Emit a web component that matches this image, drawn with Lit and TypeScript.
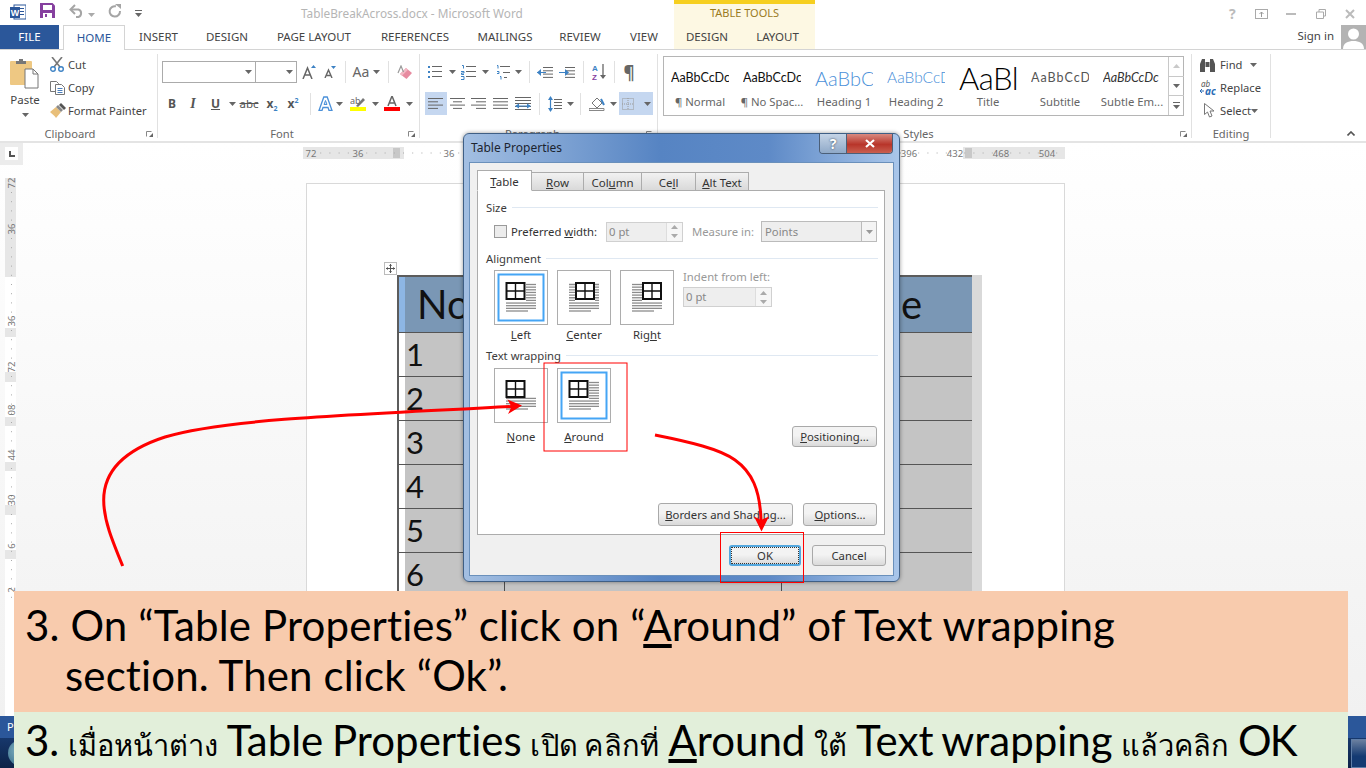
import {LitElement, html, svg, css, TemplateResult} from 'lit';
import {customElement} from 'lit/decorators.js';

const UI = css`
  * {
    box-sizing: border-box;
  }
`;

const ico = (w: number, h: number, body: unknown) =>
  html`<svg width=${w} height=${h} viewBox="0 0 ${w} ${h}" fill="none">${body}</svg>`;

const caret = ico(7, 4, svg`<path d="M0 0h7L3.500 4z" fill="#666"/>`);

const lines = (x: number, y: number, w: number, n: number, step = 3, c = '#666') =>
  Array.from({length: n}, (_, i) => svg`<path d="M${x} ${y + i * step + 0.5}h${w}" stroke=${c}/>`);

const wordIcon = ico(16, 16, svg`
  <rect x="4" y="1" width="12" height="14" fill="#fff" stroke="#2b579a"/>
  <path d="M9 4.500h5M9 7.500h5M9 10.500h5" stroke="#2b579a"/>
  <rect x="0" y="3" width="10" height="11" fill="#2b579a"/>
  <text x="5" y="12" font-size="9" font-weight="700" fill="#fff" text-anchor="middle" font-family="Liberation Sans">W</text>`);
const saveIcon = ico(15, 15, svg`
  <path d="M0 0h12.500L15 2.500V15H0z" fill="#86409f"/>
  <rect x="3" y="2" width="9" height="5" fill="#fff"/>
  <rect x="3" y="10" width="9" height="5" fill="#fff"/>
  <rect x="5" y="11" width="2" height="3" fill="#86409f"/>`);
const undoIcon = ico(15, 14, svg`
  <path d="M2 5.500h7.500a4 4 0 0 1 0 7.500H7" stroke="#a5a5a5" stroke-width="2"/>
  <path d="M6 1L1.500 5.500 6 10" stroke="#a5a5a5" stroke-width="2"/>`);
const redoIcon = ico(14, 14, svg`
  <path d="M8 2.300A5.200 5.200 0 1 0 12 7" stroke="#a5a5a5" stroke-width="2"/>
  <path d="M7 0h6v5z" fill="#a5a5a5"/>`);
const customizeIcon = ico(7, 7, svg`<path d="M0 .500h7" stroke="#666"/><path d="M0 3h7L3.500 7z" fill="#666"/>`);
const lightCaret = ico(7, 4, svg`<path d="M0 0h7L3.500 4z" fill="#aaa"/>`);

const pasteIcon = ico(30, 31, svg`
  <rect x="0" y="3" width="22" height="24" rx="1" fill="#eec883"/>
  <path d="M6 3h3V1h4v2h3v3H6z" fill="#777"/>
  <path d="M15 11h8l5 5v14H15z" fill="#fff" stroke="#777"/>
  <path d="M23 11v5h5" stroke="#777"/>`);
const cutIcon = ico(14, 15, svg`
  <path d="M2 0l8 10M12 0L4 10" stroke="#777" stroke-width="1.600"/>
  <circle cx="3" cy="12" r="2.300" stroke="#3d82c4" stroke-width="1.400"/>
  <circle cx="11" cy="12" r="2.300" stroke="#3d82c4" stroke-width="1.400"/>`);
const copyIcon = ico(15, 14, svg`
  <path d="M.5.500h6l2 2v8H.5z" fill="#fff" stroke="#777"/>
  <path d="M5.500 3.500h6l3 3v7h-9z" fill="#fff" stroke="#777"/>
  <path d="M7.500 7.500h5M7.500 9.500h5M7.500 11.500h5" stroke="#4a7ebb"/>`);
const painterIcon = ico(16, 15, svg`
  <path d="M0 9l6-5 5 5-5 6C5 13 2 11 0 9z" fill="#e8bf7a"/>
  <path d="M6 4l5 5 2-2-5-5z" fill="#888"/>
  <path d="M9 2l2-2 5 5-2 2z" fill="#555"/>`);

const growIcon = ico(14, 14, svg`
  <path d="M1 14L5.500 3 10 14M3 10h5" stroke="#666" stroke-width="1.500"/>
  <path d="M9 3l2.500-3L14 3z" fill="#3d82c4"/>`);
const shrinkIcon = ico(12, 12, svg`
  <path d="M1 12L4.500 4 8 12M2.500 9.500h4" stroke="#666" stroke-width="1.400"/>
  <path d="M7 0h5L9.500 3z" fill="#3d82c4"/>`);
const eraserIcon = ico(15, 15, svg`
  <path d="M3 9l6-6 6 5-5.500 6z" fill="#e78ba0"/>
  <path d="M3 9l6-6 2 1.700-6 6z" fill="#f2b8c4"/>
  <path d="M1 8L4 1l2.500 6" stroke="#999" stroke-width="1.200"/>`);

const glyph = (t: string, cls = '') => html`<span class="glyph ${cls}">${t}</span>`;

const effectIcon = ico(15, 15, svg`
  <path d="M5.800 1h3.400L14 14.500h-3l-1-3H5l-1 3H1z" fill="#fff" stroke="#4a90d9" stroke-width="1.300"/>
  <path d="M6 8.500h3L7.500 4.500z" fill="#cfe1f5" stroke="#4a90d9"/>`);
const highlightIcon = ico(16, 15, svg`
  <text x="0" y="8" font-size="9" fill="#666" font-family="Noto Sans">ab</text>
  <path d="M6 10l7-8 2 2-7 7z" fill="#777"/>
  <rect x="0" y="11" width="16" height="4" fill="#ff0"/>`);
const colorIcon = ico(16, 15, svg`
  <path d="M4 10L8 0l4 10M5.500 7h5" stroke="#666" stroke-width="1.500"/>
  <rect x="0" y="11" width="16" height="4" fill="#f00"/>`);

const bulletIcon = ico(14, 14, svg`
  <rect x="0" y="1" width="2" height="2" fill="#3d82c4"/><rect x="0" y="6" width="2" height="2" fill="#3d82c4"/><rect x="0" y="11" width="2" height="2" fill="#3d82c4"/>
  ${lines(4, 1, 10, 3, 5)}`);
const numberIcon = ico(15, 15, svg`
  <path d="M1 .500h1.500v3M0 6.500h3v1.500H0.500v1.500H3M0 11.500h3v3H0" stroke="#3d82c4"/>
  ${lines(5, 1, 10, 3, 5)}`);
const multiIcon = ico(14, 15, svg`
  <path d="M1 .500h1v3M1 6.500h2v2H1M4 11.500h1v3" stroke="#3d82c4"/>
  <path d="M4 1.500h10M7 7.500h7M8 12.500h3" stroke="#666"/>`);
const outdentIcon = ico(16, 11, svg`
  ${lines(6, 0, 10, 4, 3.300)}
  <path d="M0 5.500h9" stroke="#3d82c4"/><path d="M4 2L0 5.500 4 9z" fill="#3d82c4"/>`);
const indentIcon = ico(16, 11, svg`
  ${lines(6, 0, 10, 4, 3.300)}
  <path d="M0 5.500h7" stroke="#3d82c4"/><path d="M6 2l4 3.500L6 9z" fill="#3d82c4"/>`);
const sortIcon = ico(15, 16, svg`
  <text x="0" y="7" font-size="8" font-weight="700" fill="#3d82c4" font-family="Liberation Sans">A</text>
  <text x="0" y="16" font-size="8" font-weight="700" fill="#86409f" font-family="Liberation Sans">Z</text>
  <path d="M11 0v14" stroke="#666" stroke-width="1.300"/><path d="M8 11l3 4 3-4z" fill="#666"/>`);
const pilcrowIcon = html`<span class="glyph pil">¶</span>`;
const align = (x: number[][]) =>
  ico(16, 11, svg`${x.map(([a, w], i) => svg`<path d="M${a} ${i * 3.3 + 0.5}h${w}" stroke="#666"/>`)}`);
const alignLeft = align([[0, 15], [0, 10], [0, 15], [0, 10]]);
const alignCenter = align([[0, 15], [3, 9], [0, 15], [3, 9]]);
const alignRight = align([[0, 15], [5, 10], [0, 15], [5, 10]]);
const alignJustify = align([[0, 15], [0, 15], [0, 15], [0, 15]]);
const distributeIcon = ico(16, 15, svg`
  ${lines(0, 1, 16, 5, 3)}
  <path d="M1 10h14" stroke="#3d82c4"/><path d="M4 7.500L0 10l4 2.500zM12 7.500l4 2.500-4 2.500z" fill="#3d82c4"/>`);
const spacingIcon = ico(14, 16, svg`
  <path d="M2.500 1v14" stroke="#3d82c4" stroke-width="1.200"/><path d="M0 4l2.500-4L5 4zM0 12l2.500 4L5 12z" fill="#3d82c4"/>
  ${lines(6, 3, 8, 4, 3)}`);
const shadingIcon = ico(17, 15, svg`
  <path d="M3 7l5-5 5 5-5 5z" fill="#fff" stroke="#777"/>
  <path d="M12 3l3 6" stroke="#3d82c4" stroke-width="2"/>
  <path d="M0 12.500h15v2H0z" stroke="#888"/>`);
const bordersIcon = ico(12, 12, svg`
  <rect x=".5" y=".5" width="11" height="11" stroke="#999" stroke-dasharray="1 1"/>
  <path d="M6 0v12M0 6h12" stroke="#999" stroke-dasharray="1 1"/>`);
const binocularsIcon = ico(15, 14, svg`
  <path d="M0 14V6l2-5h3v13zM15 14V6l-2-5h-3v13zM5.500 4h4v5h-4z" fill="#555"/>`);
const replaceIcon = ico(16, 15, svg`
  <text x="1" y="7" font-size="8" fill="#555" font-family="Noto Sans">ab</text>
  <text x="5" y="15" font-size="10" font-weight="700" fill="#2b6cb5" font-family="Noto Sans">ac</text>
  <path d="M0 11h4M0 11l2-2M0 11l2 2" stroke="#2b6cb5"/>`);
const selectIcon = ico(10, 15, svg`<path d="M.5.500v11l3-2.500 2 5 2.500-1-2-5h4z" fill="#fff" stroke="#777"/>`);

@customElement('word-ribbon')
export class WordRibbon extends LitElement {
  static styles = [
    UI,
    css`
      :host {
        display: block;
        font-family: 'Noto Sans', sans-serif;
        font-size: 11.5px;
        color: #444;
      }
      .title {
        display: grid;
        grid-template-columns: 301px 373px 141px 1fr;
        height: 25px;
      }
      .qat {
        display: flex;
        align-items: center;
        padding: 0 0 3px 10px;
      }
      .qat svg {
        flex: none;
      }
      .qat-save {
        margin-left: 14px;
      }
      .qat-undo {
        margin-left: 14px;
      }
      .qat-undo-c {
        margin-left: 4px;
      }
      .qat-redo {
        margin-left: 13px;
      }
      .qat-more {
        margin-left: 13px;
      }
      .doc-name {
        font-size: 11.8px;
        color: #b5b5b5;
        line-height: 27px;
        white-space: nowrap;
      }
      .tt-label {
        background: #fdf8e3;
        border-top: 4px solid #f6cf1f;
        color: #9a7b1e;
        font-size: 11px;
        text-align: center;
        line-height: 18px;
      }
      .win {
        display: flex;
        justify-content: flex-end;
        align-items: center;
        padding-right: 1px;
      }
      .win span {
        width: 29.5px;
        display: flex;
        justify-content: center;
      }
      .win .help {
        color: #bbb;
        font-weight: 700;
        font-size: 14px;
      }
      .tabs {
        display: flex;
        height: 25px;
        border-bottom: 1px solid #d4d4d4;
      }
      .tab {
        flex: none;
        text-align: center;
        line-height: 24px;
        white-space: nowrap;
        height: 24px;
      }
      .file {
        background: #2b579a;
        color: #fff;
        margin-right: 4px;
      }
      .home {
        color: #2b579a;
        border: 1px solid #d4d4d4;
        border-bottom: 0;
        background: #fff;
        height: 25px;
        line-height: 23px;
      }
      .ctx {
        background: #fdf8e3;
      }
      .signin {
        margin-left: auto;
        line-height: 22px;
        margin-right: 7px;
      }
      .avatar {
        display: block;
        width: 25px;
        height: 24px;
      }
      .ribbon {
        display: flex;
        height: 93px;
        padding-top: 4px;
        border-bottom: 2px solid #e4e4e4;
      }
      .group {
        flex: none;
        height: 84px;
        border-right: 1px solid #e1e1e1;
        display: flex;
        flex-direction: column;
      }
      .w-clip {
        width: 158px;
      }
      .w-font {
        width: 262px;
        padding-left: 4px;
      }
      .w-para {
        width: 238px;
        padding-left: 5px;
      }
      .w-styles {
        width: 534px;
        padding: 2px 0 0 5px;
      }
      .w-edit {
        width: 79px;
      }
      .body {
        flex: 1;
        min-height: 0;
      }
      .glabel {
        display: flex;
        align-items: center;
        height: 16px;
        margin-bottom: -3px;
        color: #666;
        font-size: 11.2px;
      }
      .glabel .nm {
        flex: 1;
        text-align: center;
      }
      .launch {
        margin: 2px 4px 0 6px;
        width: 7px;
        height: 6px;
        display: block;
      }
      .clip {
        display: flex;
      }
      .paste {
        width: 50px;
        display: flex;
        flex-direction: column;
        align-items: center;
        padding-top: 4px;
      }
      .paste span {
        margin-top: 3px;
        line-height: 16px;
        font-size: 11.5px;
      }
      .paste svg:last-child {
        margin-top: 5px;
      }
      .cmds {
        margin-top: -1px;
      }
      .cmd {
        height: 23px;
        display: flex;
        align-items: center;
        white-space: nowrap;
        font-size: 11.2px;
      }
      .cmd i {
        flex: none;
        width: 18px;
        display: flex;
      }
      .edit-cmds {
        padding-left: 8px;
      }
      .edit-cmds .cmd i {
        width: 20px;
      }
      .edit-cmds .select-i {
        width: 19px;
        padding-left: 4px;
      }
      .find-c {
        display: flex;
        margin-left: 7px;
      }
      .bd-c {
        display: flex;
        margin-left: 10px;
      }
      .select-c {
        display: flex;
      }
      .row {
        display: flex;
        align-items: center;
      }
      .row1 {
        height: 22px;
        margin-top: 7px;
      }
      .row2 {
        height: 23px;
        margin-top: 9px;
      }
      .cell {
        flex: none;
        height: 100%;
        display: flex;
        align-items: center;
        justify-content: center;
      }
      .on {
        background: #c5d7f0;
      }
      .sep::after {
        content: '';
        width: 1px;
        height: 22px;
        background: #e1e1e1;
      }
      .combo {
        height: 22px;
        border: 1px solid #ababab;
        display: flex;
        align-items: center;
        justify-content: flex-end;
        padding-right: 3px;
        flex: none;
      }
      .c1 {
        width: 94px;
      }
      .c2 {
        width: 42px;
        margin-left: -1px;
      }
      .glyph {
        font-weight: 700;
        font-size: 12px;
        color: #555;
        line-height: 1;
      }
      .g-i {
        font-style: italic;
        font-family: 'Liberation Serif', serif;
        font-size: 14px;
      }
      .g-u {
        text-decoration: underline;
      }
      .g-s {
        text-decoration: line-through;
        font-weight: 400;
        font-size: 11.5px;
      }
      .g-aa {
        font-size: 14px;
        font-weight: 400;
        color: #666;
      }
      .pil {
        font-size: 17px;
        font-weight: 700;
        color: #666;
      }
      .g-sub sub,
      .g-sub sup {
        font-size: 7px;
        color: #3d82c4;
        line-height: 0;
      }
      .gallery {
        width: 521px;
        height: 60px;
        border: 1px solid #b5b5b5;
        display: flex;
      }
      .style {
        flex: none;
        width: 72px;
        padding: 0 7px;
        display: flex;
        flex-direction: column;
      }
      .sample {
        height: 37px;
        width: 58px;
        overflow: hidden;
        white-space: nowrap;
        display: flex;
        align-items: center;
        padding-top: 5px;
        font-family: Lato, sans-serif;
        font-size: 12.5px;
        line-height: 1;
        color: #111;
      }
      .s-h1 {
        font-size: 20px;
        font-weight: 300;
        color: #4a90d9;
      }
      .s-h2 {
        font-size: 15.5px;
        font-weight: 300;
        color: #4a90d9;
      }
      .s-title {
        font-size: 31px;
        font-weight: 300;
        color: #000;
        letter-spacing: -0.5px;
      }
      .s-sub {
        letter-spacing: 1px;
        color: #555;
        font-size: 12.5px;
      }
      .s-em {
        font-style: italic;
        color: #333;
      }
      .style-name {
        text-align: center;
        white-space: nowrap;
        margin: 0 -7px;
        line-height: 16px;
        color: #666;
        font-size: 11.3px;
      }
      .scroll {
        flex: none;
        width: 16px;
        border-left: 1px solid #c8c8c8;
        display: flex;
        flex-direction: column;
      }
      .scroll div {
        flex: 1;
        display: flex;
        align-items: center;
        justify-content: center;
      }
      .scroll div + div {
        border-top: 1px solid #c8c8c8;
      }
      .scroll .off {
        opacity: 0.35;
      }
      .collapse {
        flex: 1;
        display: flex;
        justify-content: flex-end;
        align-items: flex-end;
        padding: 0 11px 5px 0;
      }
    `,
  ];

  private tabs: [string, number][] = [
    ['INSERT', 67],
    ['DESIGN', 70],
    ['PAGE LAYOUT', 104],
    ['REFERENCES', 98],
    ['MAILINGS', 82],
    ['REVIEW', 68],
    ['VIEW', 60],
  ];

  private tools(items: [number, unknown, string?][]) {
    return items.map(
      ([w, t, c]) =>
        html`<span class="cell ${c ?? ''}" style="width:${w}px">${t}</span>`
    );
  }

  private launcher() {
    return html`<svg class="launch" viewBox="0 0 7 6">
      <path d="M.5 5.500V.500h5" stroke="#888" fill="none" />
      <path d="M7 6H3l4-4z" fill="#666" />
    </svg>`;
  }

  private group(cls: string, name: string, launch: boolean, body: TemplateResult) {
    return html`<div class="group ${cls}">
      <div class="body">${body}</div>
      <div class="glabel">
        <span class="nm">${name}</span>${launch ? this.launcher() : ''}
      </div>
    </div>`;
  }

  private styleItem(sample: string, cls: string, name: string) {
    return html`<div class="style">
      <div class="sample ${cls}">${sample}</div>
      <div class="style-name">${name}</div>
    </div>`;
  }

  render() {
    return html`
      <div class="title">
        <div class="qat">
          ${wordIcon}
          <span class="qat-save">${saveIcon}</span>
          <span class="qat-undo">${undoIcon}</span>
          <span class="qat-undo-c">${lightCaret}</span>
          <span class="qat-redo">${redoIcon}</span>
          <span class="qat-more">${customizeIcon}</span>
        </div>
        <div class="doc-name">TableBreakAcross.docx - Microsoft Word</div>
        <div class="tt-label">TABLE TOOLS</div>
        <div class="win">
          <span class="help">?</span>
          <span>${ico(13, 10, svg`<rect x=".5" y=".5" width="12" height="9" stroke="#aaa"/><path d="M6.500 8V3M4.500 5l2-2 2 2" stroke="#999"/>`)}</span>
          <span>${ico(10, 2, svg`<rect width="10" height="2" fill="#bbb"/>`)}</span>
          <span>${ico(10, 10, svg`<path d="M.5 3h7v6.500H.5zM3 3V.5h6.500V7H8" stroke="#aaa"/>`)}</span>
          <span>${ico(10, 10, svg`<path d="M1 1l8 8M9 1l-8 8" stroke="#bbb" stroke-width="2"/>`)}</span>
        </div>
      </div>
      <div class="tabs">
        <div class="tab file" style="width:59px">FILE</div>
        <div class="tab home" style="width:62px">HOME</div>
        ${this.tabs.map(
          ([t, w]) => html`<div class="tab" style="width:${w}px">${t}</div>`
        )}
        <div class="tab ctx" style="width:66px">DESIGN</div>
        <div class="tab ctx" style="width:75px">LAYOUT</div>
        <div class="signin">Sign in</div>
        <svg class="avatar" viewBox="0 0 25 24">
          <rect width="25" height="24" fill="#b3b3b3" />
          <circle cx="12.500" cy="9" r="5.500" fill="#fff" />
          <path d="M2 24c0-6 5-8 10.500-8S23 18 23 24z" fill="#fff" />
        </svg>
      </div>
      <div class="ribbon">
        ${this.group(
          'w-clip',
          'Clipboard',
          true,
          html`<div class="clip">
            <div class="paste">
              ${pasteIcon}
              <span>Paste</span>
              ${caret}
            </div>
            <div class="cmds">
              <div class="cmd"><i>${cutIcon}</i>Cut</div>
              <div class="cmd"><i>${copyIcon}</i>Copy</div>
              <div class="cmd"><i>${painterIcon}</i>Format Painter</div>
            </div>
          </div>`
        )}
        ${this.group(
          'w-font',
          'Font',
          true,
          html`<div class="row row1">
              <div class="combo c1">${caret}</div>
              <div class="combo c2">${caret}</div>
              ${this.tools([
                [23, growIcon],
                [20, shrinkIcon],
                [10, '', 'sep'],
                [22, glyph('Aa', 'g-aa')],
                [8, caret],
                [16, '', 'sep'],
                [16, eraserIcon],
              ])}
            </div>
            <div class="row row2">
              ${this.tools([
                [20, glyph('B')],
                [22, glyph('I', 'g-i')],
                [23, glyph('U', 'g-u')],
                [10, caret],
                [24, glyph('abc', 'g-s')],
                [22, html`<span class="glyph g-sub">x<sub>2</sub></span>`],
                [20, html`<span class="glyph g-sub">x<sup>2</sup></span>`],
                [14, '', 'sep'],
                [16, effectIcon],
                [12, caret],
                [26, highlightIcon],
                [8, caret],
                [26, colorIcon],
                [8, caret],
              ])}
            </div>`
        )}
        ${this.group(
          'w-para',
          'Paragraph',
          true,
          html`<div class="row row1">
              ${this.tools([
                [20, bulletIcon],
                [14, caret],
                [19, numberIcon],
                [15, caret],
                [19, multiIcon],
                [12, caret],
                [10, '', 'sep'],
                [22, outdentIcon],
                [22, indentIcon],
                [10, '', 'sep'],
                [22, sortIcon],
                [8, '', 'sep'],
                [22, pilcrowIcon],
              ])}
            </div>
            <div class="row row2">
              ${this.tools([
                [22, alignLeft, 'on'],
                [21, alignCenter],
                [22, alignRight],
                [22, alignJustify],
                [22, distributeIcon],
                [10, '', 'sep'],
                [22, spacingIcon],
                [8, caret],
                [12, '', 'sep'],
                [22, shadingIcon],
                [11, caret],
                [34, html`${bordersIcon}<span class="bd-c">${caret}</span>`, 'on'],
              ])}
            </div>`
        )}
        ${this.group(
          'w-styles',
          'Styles',
          true,
          html`<div class="gallery">
            ${this.styleItem('AaBbCcDc', '', '¶ Normal')}
            ${this.styleItem('AaBbCcDc', '', '¶ No Spac...')}
            ${this.styleItem('AaBbCc', 's-h1', 'Heading 1')}
            ${this.styleItem('AaBbCcD', 's-h2', 'Heading 2')}
            ${this.styleItem('AaBl', 's-title', 'Title')}
            ${this.styleItem('AaBbCcD', 's-sub', 'Subtitle')}
            ${this.styleItem('AaBbCcDc', 's-em', 'Subtle Em...')}
            <div class="scroll">
              <div class="off">${ico(7, 4, svg`<path d="M0 4h7L3.500 0z" fill="#666"/>`)}</div>
              <div>${caret}</div>
              <div>${customizeIcon}</div>
            </div>
          </div>`
        )}
        ${this.group(
          'w-edit',
          'Editing',
          false,
          html`<div class="cmds edit-cmds">
            <div class="cmd">
              <i>${binocularsIcon}</i>Find<span class="find-c">${caret}</span>
            </div>
            <div class="cmd"><i>${replaceIcon}</i>Replace</div>
            <div class="cmd">
              <i class="select-i">${selectIcon}</i>Select<span class="select-c">${caret}</span>
            </div>
          </div>`
        )}
        <div class="collapse">
          ${ico(8, 5, svg`<path d="M.5 4.500L4 1l3.500 3.500" stroke="#555" stroke-width="1.600"/>`)}
        </div>
      </div>
    `;
  }
}

const VR_WHITE: [number, number][] = [
  [277, 328],
  [337, 372],
  [382, 417],
  [426, 462],
  [471, 505],
  [515, 550],
  [559, 716],
];
const VR_LABELS: [string, number][] = [
  ['72', 183],
  ['36', 229],
  ['36', 321],
  ['72', 367],
  ['08', 410],
  ['44', 455],
  ['30', 500],
  ['6', 546],
  ['2', 590],
];
const HR_LABELS: [string, number][] = [
  ['72', 311],
  ['36', 358],
  ['36', 449],
  ['396', 909],
  ['432', 955],
  ['468', 1001],
  ['504', 1047],
];

@customElement('word-document')
export class WordDocument extends LitElement {
  static styles = [
    UI,
    css`
      :host {
        display: block;
        height: 100%;
        font-family: 'Noto Sans', sans-serif;
      }
      .doc {
        display: grid;
        grid-template-columns: 23px 1fr;
        grid-template-rows: 22px 1fr;
        height: 100%;
        background: linear-gradient(#fff, #f1f1f1);
        overflow: hidden;
      }
      .corner {
        background: #ececec;
        padding: 4px 5px;
      }
      .corner div {
        width: 13px;
        height: 13px;
        background: #fff;
        display: flex;
        align-items: center;
        justify-content: center;
      }
      .hr {
        display: block;
        margin: 4px 0 0 280px;
      }
      .vr {
        display: block;
      }
      .pagewrap {
        min-height: 0;
        overflow: hidden;
        padding: 18px 0 0 283px;
      }
      .page {
        position: relative;
        width: 759px;
        height: 800px;
        background: #fff;
        border: 1px solid #d9d9d9;
        padding: 91px 0 0 90px;
      }
      .move {
        position: absolute;
        left: 77px;
        top: 78px;
        width: 13px;
        height: 13px;
        border: 1px solid #bbb;
        background: #fff;
        display: flex;
        align-items: center;
        justify-content: center;
      }
      .table {
        display: grid;
        width: 585px;
        grid-template-columns: 107px 277px 191px 10px;
        font-family: Lato, sans-serif;
        color: #111;
      }
      .c {
        border-left: 1px solid #4c4c4c;
        border-bottom: 1px solid #555;
        height: 44px;
        background: #c4c4c4;
        font-size: 31px;
        line-height: 42px;
      }
      .c.first {
        border-left: 2px solid #5c5c5c;
        background: linear-gradient(to right, #fff 6px, #c4c4c4 6px);
        padding-left: 7px;
      }
      .h {
        background: #7a97b5;
        height: 58px;
        border-top: 2px solid #5c5c5c;
        font-size: 40px;
        line-height: 54px;
      }
      .h.first {
        background: linear-gradient(to right, #8db6e4 6px, #7a97b5 6px);
        padding-left: 18px;
      }
      .h.end {
        text-align: right;
        padding-right: 50px;
      }
      .strip {
        background: #d9d9d9;
      }
    `,
  ];

  render() {
    const rows = ['1', '2', '3', '4', '5', '6'];
    return html`<div class="doc">
      <div class="corner">
        <div>
          <svg width="6" height="6" viewBox="0 0 6 6">
            <path d="M1 0v5h5" stroke="#555" stroke-width="2" fill="none" />
          </svg>
        </div>
      </div>
      <svg class="hr" width="762" height="12" viewBox="303 0 762 12" font-size="9.5" font-family="Noto Sans">
        <rect x="303" width="762" height="12" fill="#e6e6e6" />
        <rect x="404" width="559" height="12" fill="#fff" />
        <rect x="393" y="1" width="7" height="10" fill="#c8c8c8" />
        <rect x="965" y="1" width="7" height="10" fill="#c8c8c8" />
        ${Array.from({length: 82}, (_, i) => 311 + i * 9.2).map(
          (x) => svg`<rect x=${x} y="5.500" width="1" height="1" fill="#aaa" />`
        )}
        ${HR_LABELS.map(
          ([t, x]) => svg`<rect x=${x - 7} width="14" y="1" height="10" fill=${x < 400 || x > 963 ? '#e6e6e6' : '#fff'} /><text x=${x} y="9.500" fill="#777" text-anchor="middle">${t}</text>`
        )}
      </svg>
      <svg class="vr" width="23" height="551" viewBox="0 165 23 551" font-size="9.5" font-family="Noto Sans">
        <rect x="5" y="178" width="11" height="538" fill="#e6e6e6" />
        ${VR_WHITE.map(
          ([a, b]) => svg`<rect x="5" y=${a} width="11" height=${b - a} fill="#fff" />`
        )}
        ${Array.from({length: 45}, (_, i) => 192 + i * 9.2).map(
          (y) => svg`<rect x="11" y=${y} width="1" height="1" fill="#aaa" />`
        )}
        ${VR_LABELS.map(
          ([t, y]) => svg`<text x="14.500" y=${y} fill="#777" text-anchor="middle" transform="rotate(-90 14.500 ${y})">${t}</text>`
        )}
      </svg>
      <div class="pagewrap">
        <div class="page">
          <div class="move">
            <svg width="9" height="9" viewBox="0 0 9 9">
              <path d="M4.500 0v9M0 4.500h9" stroke="#555" />
              <path d="M3 2l1.500-2L6 2zM3 7l1.500 2L6 7zM2 3L0 4.500 2 6zM7 3l2 1.500L7 6z" fill="#555" />
            </svg>
          </div>
          <div class="table">
            <div class="c h first">No</div>
            <div class="c h"></div>
            <div class="c h end">Name</div>
            <div class="strip"></div>
            ${rows.map(
              (r) => html`<div class="c first">${r}</div>
                <div class="c"></div>
                <div class="c"></div>
                <div class="strip"></div>`
            )}
          </div>
        </div>
      </div>
    </div>`;
  }
}

type OptKind = 'left' | 'center' | 'right' | 'none' | 'around';

@customElement('table-dialog')
export class TableDialog extends LitElement {
  static styles = [
    UI,
    css`
      :host {
        position: absolute;
        left: 463px;
        top: 133px;
        width: 437px;
        height: 449px;
        font-family: 'Noto Sans', sans-serif;
        font-size: 11.3px;
        color: #333;
      }
      .win {
        height: 100%;
        border: 1px solid #3f5f85;
        border-radius: 6px;
        background: linear-gradient(90deg, #a3bfe2, #5684c3 45%, #5e8ac7 70%, #a9c6ea);
        box-shadow: 0 0 4px rgba(0, 0, 0, 0.4);
        padding: 0 5px 5px;
        display: flex;
        flex-direction: column;
      }
      .bar {
        height: 28px;
        flex: none;
        display: flex;
      }
      .cap {
        flex: 1;
        line-height: 27px;
        padding-left: 2px;
        font-size: 12px;
        color: #1c2430;
      }
      .ctl {
        display: flex;
        height: 20px;
        margin-right: 1px;
        border: 1px solid #4b5f78;
        border-top: 0;
        border-radius: 0 0 4px 4px;
        overflow: hidden;
      }
      .ctl span {
        display: flex;
        align-items: center;
        justify-content: center;
      }
      .q {
        width: 27px;
        background: linear-gradient(#c5d4e6, #8fa9c8);
        color: #fff;
        font-weight: 700;
        font-size: 14px;
        text-shadow: 0 0 2px #234;
        border-right: 1px solid #4b5f78;
      }
      .x {
        width: 45px;
        background: linear-gradient(#d98a80, #b8352a 55%, #c95f50);
      }
      .panel {
        flex: 1;
        min-height: 0;
        background: #f0f0f0;
        border: 1px solid #6a90bb;
        padding: 7px 7px 9px 7px;
        display: flex;
        flex-direction: column;
      }
      .tabs {
        display: flex;
        height: 21px;
        flex: none;
        align-items: flex-end;
        position: relative;
        z-index: 1;
        margin-bottom: -1px;
      }
      .tab {
        height: 19px;
        border: 1px solid #acacac;
        border-left: 0;
        background: linear-gradient(#f2f2f2, #d9d9d9);
        text-align: center;
        line-height: 19px;
        font-size: 11.5px;
      }
      .tab.cur {
        height: 21px;
        line-height: 22px;
        background: #fff;
        border-left: 1px solid #acacac;
        border-bottom-color: #fff;
      }
      .page {
        flex: 1;
        min-height: 0;
        margin-right: 1px;
        background: #fff;
        border: 1px solid #acacac;
        padding: 9px 6px 8px 8px;
        display: flex;
        flex-direction: column;
      }
      .head {
        display: flex;
        align-items: center;
        height: 14px;
        gap: 5px;
        color: #3c3c3c;
      }
      .head::after {
        content: '';
        flex: 1;
        height: 1px;
        background: #dfe8f2;
      }
      .head.a {
        margin-top: 9px;
      }
      .head.w {
        margin-top: 5px;
      }
      .size {
        display: flex;
        align-items: center;
        height: 21px;
        margin: 7px 0 0 8px;
        white-space: nowrap;
      }
      .check {
        flex: none;
        width: 13px;
        height: 13px;
        border: 1px solid #9a9a9a;
        background: #ececec;
        margin-right: 4px;
      }
      .lbl {
        flex: none;
        width: 95px;
      }
      .spin {
        display: flex;
        border: 1px solid #d0d0d0;
        background: #eee;
        height: 20px;
        flex: none;
        color: #888;
      }
      .spin .v {
        flex: 1;
        padding-left: 2px;
        line-height: 18px;
      }
      .spin .b {
        width: 16px;
        border-left: 1px solid #ddd;
        display: flex;
        flex-direction: column;
        align-items: center;
        justify-content: space-around;
        background: #f6f6f6;
      }
      .w77 {
        width: 77px;
      }
      .w89 {
        width: 89px;
        margin-top: 3px;
      }
      .dim {
        color: #999;
      }
      .mi {
        flex: none;
        width: 78px;
        padding-left: 9px;
      }
      .sel {
        flex: none;
        width: 116px;
        height: 21px;
        border: 1px solid #bbb;
        background: #eee;
        display: flex;
        align-items: center;
        justify-content: space-between;
        padding-left: 3px;
        color: #888;
      }
      .sel span {
        width: 15px;
        height: 19px;
        border-left: 1px solid #bbb;
        background: #f4f4f4;
        display: flex;
        align-items: center;
        justify-content: center;
      }
      .opts {
        display: flex;
        margin: 5px 0 0 8px;
      }
      .opts.wrap {
        margin-top: 6px;
      }
      .opt {
        width: 54px;
        margin-right: 9px;
        text-align: center;
      }
      .box {
        height: 55px;
        border: 1px solid #adadad;
        background: #fff;
        display: block;
      }
      .opt .t {
        display: block;
        margin-top: 2px;
        line-height: 16px;
      }
      .opts.wrap .t {
        margin-top: 6px;
      }
      .indent {
        line-height: 14px;
      }
      .pos {
        margin: 58px 1px 0 auto;
        width: 85px;
      }
      .btn {
        height: 21px;
        line-height: 19px;
        text-align: center;
        border: 1px solid #a9a9a9;
        border-radius: 3px;
        background: linear-gradient(#f3f3f3 45%, #dadada);
        color: #333;
        flex: none;
      }
      .bottom {
        display: flex;
        justify-content: flex-end;
        gap: 10px;
        margin: auto 1px 0 0;
      }
      .bottom .btn {
        height: 23px;
        line-height: 21px;
      }
      .bs {
        width: 135px;
      }
      .op {
        width: 74px;
      }
      .actions {
        display: flex;
        justify-content: flex-end;
        gap: 11px;
        margin-top: 10px;
      }
      .ok {
        width: 72px;
        border: 2px solid #53a7de;
        line-height: 17px;
        outline: 1px dotted #333;
        outline-offset: -3px;
      }
      .cancel {
        width: 74px;
      }
    `,
  ];

  private tabs: [TemplateResult, number][] = [
    [html`<u>R</u>ow`, 52],
    [html`Col<u>u</u>mn`, 58],
    [html`Ce<u>l</u>l`, 54],
    [html`<u>A</u>lt Text`, 53],
  ];

  private optionIcon(kind: OptKind, selected = false) {
    const tx = kind === 'center' ? 18 : kind === 'right' ? 22 : 11.5;
    const rows = Array.from({length: 11}, (_, i) => 13.5 + i * 2.65);
    return html`<svg class="box" viewBox="0 0 52 53">
      ${selected
        ? svg`<rect x="3.500" y="3.500" width="45" height="46" fill="none" stroke="#45a5f5" stroke-width="2"/>`
        : ''}
      ${rows.map((y, i) => {
        if (kind === 'none' && i < 6) return '';
        const last = i === rows.length - 1;
        const inTable = y < 30;
        let a = 11;
        let b = 41;
        if (inTable && kind !== 'none') {
          if (kind === 'left' || kind === 'around') a = 31;
          if (kind === 'right') b = 21;
          if (kind === 'center') {
            return svg`<path d="M11 ${y}h6M37 ${y}h4" stroke="#8c8c8c" stroke-width="1.300"/>`;
          }
        }
        if (last) b = 33;
        return svg`<path d="M${a} ${y}H${b}" stroke="#8c8c8c" stroke-width="1.300"/>`;
      })}
      <rect x=${tx} y="12" width="18" height="16" fill="#fff" stroke="#111" stroke-width="2" />
      <path d="M${tx + 9} 12v16M${tx} 20h18" stroke="#111" stroke-width="1.400" />
    </svg>`;
  }

  private spinner() {
    return html`<span class="b">
      ${ico(7, 4, svg`<path d="M0 4h7L3.500 0z" fill="#aaa"/>`)}
      ${ico(7, 4, svg`<path d="M0 0h7L3.500 4z" fill="#aaa"/>`)}
    </span>`;
  }

  render() {
    return html`<div class="win">
      <div class="bar">
        <div class="cap">Table Properties</div>
        <div class="ctl">
          <span class="q">?</span>
          <span class="x">${ico(10, 9, svg`<path d="M1 1l8 7M9 1L1 8" stroke="#fff" stroke-width="2.200"/>`)}</span>
        </div>
      </div>
      <div class="panel">
        <div class="tabs">
          <div class="tab cur" style="width:55px"><u>T</u>able</div>
          ${this.tabs.map(
            ([t, w]) => html`<div class="tab" style="width:${w}px">${t}</div>`
          )}
        </div>
        <div class="page">
          <div class="head">Size</div>
          <div class="size">
            <span class="check"></span>
            <span class="lbl">Preferred <u>w</u>idth:</span>
            <div class="spin w77">
              <span class="v">0 pt</span>${this.spinner()}
            </div>
            <span class="mi dim">Measure in:</span>
            <div class="sel">
              Points<span>${ico(7, 4, svg`<path d="M0 0h7L3.500 4z" fill="#999"/>`)}</span>
            </div>
          </div>
          <div class="head a">Alignment</div>
          <div class="opts">
            <div class="opt">
              ${this.optionIcon('left', true)}<span class="t"><u>L</u>eft</span>
            </div>
            <div class="opt">
              ${this.optionIcon('center')}<span class="t"><u>C</u>enter</span>
            </div>
            <div class="opt">
              ${this.optionIcon('right')}<span class="t">Rig<u>h</u>t</span>
            </div>
            <div class="indent dim">
              Indent from left:
              <div class="spin w89">
                <span class="v">0 pt</span>${this.spinner()}
              </div>
            </div>
          </div>
          <div class="head w">Text wrapping</div>
          <div class="opts wrap">
            <div class="opt">
              ${this.optionIcon('none')}<span class="t"><u>N</u>one</span>
            </div>
            <div class="opt">
              ${this.optionIcon('around', true)}<span class="t"><u>A</u>round</span>
            </div>
            <div class="btn pos"><u>P</u>ositioning...</div>
          </div>
          <div class="bottom">
            <div class="btn bs"><u>B</u>orders and Shading...</div>
            <div class="btn op"><u>O</u>ptions...</div>
          </div>
        </div>
        <div class="actions">
          <div class="btn ok">OK</div>
          <div class="btn cancel">Cancel</div>
        </div>
      </div>
    </div>`;
  }
}

@customElement('app-root')
export class AppRoot extends LitElement {
  static styles = [
    UI,
    css`
      :host {
        display: block;
        position: relative;
        width: 1366px;
        height: 768px;
        overflow: hidden;
        background: #fff;
      }
      .shell {
        display: flex;
        flex-direction: column;
        height: 768px;
      }
      .docarea {
        flex: 1;
        min-height: 0;
      }
      .status {
        flex: none;
        height: 22px;
        background: #2b579a;
        color: #fff;
        font: 11px 'Noto Sans', sans-serif;
        line-height: 22px;
        padding-left: 7px;
      }
      .taskbar {
        flex: none;
        height: 30px;
        background: linear-gradient(#17386c, #0d2247);
        display: flex;
        justify-content: space-between;
      }
      .orb {
        width: 26px;
        height: 26px;
        margin: 2px 0 0 8px;
        border-radius: 50%;
        background: radial-gradient(circle at 40% 40%, #7fb0c0, #2a5f80);
      }
      .showdesk {
        width: 15px;
        margin-top: 1px;
        border: 1px solid #5f7ea8;
        border-right: 0;
        background: linear-gradient(#6a7f9f, #143a72 60%);
      }
      .overlay {
        position: absolute;
        left: 0;
        top: 0;
        pointer-events: none;
      }
      .note {
        position: absolute;
        left: 14px;
        width: 1334px;
        font-family: Lato, sans-serif;
        font-variant-ligatures: none;
        color: #000;
        white-space: nowrap;
      }
      .en {
        top: 591px;
        height: 121px;
        background: #f8cbad;
        font-size: 42px;
        line-height: 50px;
        letter-spacing: 0.15px;
        padding: 9px 0 0 11px;
      }
      .en .second {
        padding-left: 40px;
      }
      .th {
        top: 712px;
        height: 56px;
        background: #e2efda;
        font-size: 42px;
        line-height: 56px;
        word-spacing: -2px;
        padding-left: 11px;
        overflow: hidden;
      }
      .th .thai {
        font-size: 29px;
        font-weight: 300;
      }
      .th .wide {
        letter-spacing: 0.3px;
      }
      .th .tight {
        letter-spacing: -2px;
      }
    `,
  ];

  render() {
    return html`
      <div class="shell">
        <word-ribbon></word-ribbon>
        <div class="docarea"><word-document></word-document></div>
        <div class="status">P</div>
        <div class="taskbar">
          <div class="orb"></div>
          <div class="showdesk"></div>
        </div>
      </div>
      <table-dialog></table-dialog>
      <svg class="overlay" width="1366" height="768" viewBox="0 0 1366 768" fill="none">
        <rect x="544" y="363" width="83" height="88" stroke="#f00" />
        <rect x="720.500" y="532.500" width="83" height="50" stroke="#f00" />
        <path
          d="M122.700 566C112 540 103.700 520 103.700 500C103.700 470 125 450 165 437C220 420 340 415 512 406.500"
          stroke="#f00"
          stroke-width="3"
        />
        <path d="M522 405.500L507.500 399.500L511.500 406.800L508 414z" fill="#f00" />
        <path
          d="M655 435C690 442 720 449 735 460C752 472 760 490 761 520"
          stroke="#f00"
          stroke-width="3"
        />
        <path d="M761.500 531.500L754 516.500L761 520L769 516.500z" fill="#f00" />
      </svg>
      <div class="note en">
        3. On “Table Properties” click on “<u>A</u>round” of Text wrapping<br />
        <span class="second">section. Then click “Ok”.</span>
      </div>
      <div class="note th">
        3. <span class="thai">เมื่อหน้าต่าง</span> Table Properties
        <span class="thai wide">เปิด คลิกที่</span> <u>A</u>round
        <span class="thai">ใต้</span> Text wrapping
        <span class="thai">แล้วคลิก</span> <span class="tight">OK</span>
      </div>
    `;
  }
}
